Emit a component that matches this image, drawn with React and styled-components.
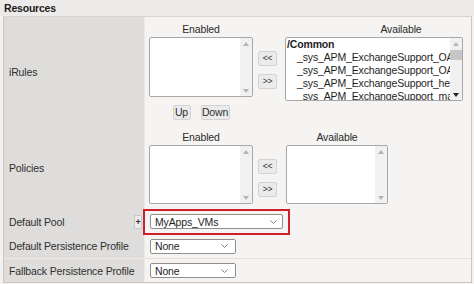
import React from 'react';
import styled, { createGlobalStyle } from 'styled-components';

const GlobalStyle = createGlobalStyle`
  body {
    margin: 0;
    background: #f3f2f0;
    font-family: "Liberation Sans", Arial, sans-serif;
    font-size: 10.5px;
    letter-spacing: -0.15px;
    color: #2b2b2b;
  }
  * { box-sizing: border-box; }
`;

const Header = styled.div`
  height: 16px;
  line-height: 17px;
  padding-left: 4px;
  font-weight: bold;
  font-size: 10.5px;
  letter-spacing: -0.2px;
  background: #ecebe9;
  color: #1d1d1d;
`;

const Table = styled.div`
  margin-left: 3px;
  width: 469px;
  border: 1px solid #c9c8c6;
  border-top-color: #d6d5d3;
  background: #f5f4f2;
`;

const Label = styled.div`
  background: #dedddb;
  border-right: 1px solid #eceae8;
  display: flex;
  align-items: center;
  justify-content: space-between;
  padding: 0 2px 0 5px;
  color: #2e2e2e;
`;

const Cell = styled.div`
  position: relative;
  display: flex;
  align-items: ${(p) => (p.$top ? 'flex-start' : 'center')};
  padding-left: ${(p) => p.$pl || 4}px;
  padding-top: ${(p) => p.$pt || 0}px;
`;

const Row = styled.div`
  display: grid;
  grid-template-columns: 141px 1fr;
  height: ${(p) => p.$h}px;
  & + & > ${Label} {
    border-top: 1px solid #ebeae8;
  }
  & + & > ${Cell} {
    border-top: 1px solid #e2e1df;
  }
`;

const Column = styled.div`
  display: flex;
  flex-direction: column;
  align-items: center;
  width: ${(p) => p.$w}px;
  margin-left: ${(p) => p.$ml || 0}px;
`;

const ColLabel = styled.div`
  width: 100%;
  height: 14px;
  line-height: 14px;
  margin-bottom: 1px;
  text-align: center;
  padding-left: ${(p) => p.$shift || 0}px;
  color: #2b2b2b;
`;

const ListBox = styled.div`
  width: 100%;
  height: ${(p) => p.$h}px;
  background: #fff;
  border: 1px solid #a8a8a8;
  border-radius: 2px;
  display: flex;
  overflow: hidden;
`;

const Options = styled.div`
  flex: 1;
  overflow: hidden;
  white-space: nowrap;
  padding-left: 1px;
  line-height: 13px;
  color: #1e1e1e;
`;

const Option = styled.div`
  font-weight: ${(p) => (p.$group ? 'bold' : 'normal')};
  padding-left: ${(p) => (p.$group ? 0 : 10)}px;
`;

const Track = styled.div`
  width: 12px;
  background: #f1f1f1;
  display: flex;
  flex-direction: column;
  align-items: center;
  padding: 4px 0 3px;
`;

const Thumb = styled.div`
  width: 12px;
  height: 10px;
  margin-top: 4px;
  background: #c6c6c6;
`;

const Spacer = styled.div`
  flex: 1;
`;

const MoveButtons = styled.div`
  display: flex;
  flex-direction: column;
  gap: 8px;
  margin-left: 5px;
  padding-top: ${(p) => p.$pt}px;
`;

const SmallButton = styled.div`
  width: ${(p) => p.$w || 19}px;
  height: 15px;
  line-height: 13px;
  text-align: center;
  background: #ebebeb;
  border: 1px solid #d3d3d3;
  border-radius: 2px;
  font-size: ${(p) => (p.$small ? 8.5 : 10.5)}px;
  color: #2e2e2e;
`;

const UpDown = styled.div`
  display: flex;
  gap: 10px;
  margin-top: 8px;
`;

const PlusButton = styled.div`
  width: 8px;
  height: 14px;
  line-height: 12px;
  text-align: center;
  font-size: 9px;
  font-weight: bold;
  background: #ececec;
  border: 1px solid #c9c9c9;
  color: #333;
`;

const Select = styled.div`
  width: ${(p) => p.$w}px;
  height: 15px;
  background: #fff;
  border: 1px solid #8f8f8f;
  border-radius: 2px;
  display: flex;
  align-items: center;
  justify-content: space-between;
  padding: 0 ${(p) => p.$pr || 7}px 0 4px;
  color: #1e1e1e;
`;

const Highlight = styled.div`
  position: absolute;
  left: -2px;
  top: 0;
  width: 147px;
  height: 26px;
  border: 2px solid #cf1f2b;
  pointer-events: none;
`;

const Arrow = ({ up, color = '#b5b5b5' }) => (
  <svg width="6" height="4" viewBox="0 0 6 4">
    <polygon points={up ? '0,4 3,0 6,4' : '0,0 6,0 3,4'} fill={color} />
  </svg>
);

const Chevron = () => (
  <svg width="7" height="4" viewBox="0 0 7 4">
    <polyline points="0.5,0.5 3.5,3.5 6.5,0.5" fill="none" stroke="#777" strokeWidth="0.9" />
  </svg>
);

const Scroll = ({ thumb, downColor }) => (
  <Track>
    <Arrow up />
    {thumb && <Thumb />}
    <Spacer />
    <Arrow color={downColor} />
  </Track>
);

const availableRules = [
  '_sys_APM_ExchangeSupport_OA_BasicAuth',
  '_sys_APM_ExchangeSupport_OA_NtlmAuth',
  '_sys_APM_ExchangeSupport_helper',
  '_sys_APM_ExchangeSupport_main',
];

const App = () => {
  return (
    <>
      <GlobalStyle />
      <Header>Resources</Header>
      <Table>
        <Row $h={109}>
          <Label>iRules</Label>
          <Cell $top $pt={5}>
            <Column $w={104}>
              <ColLabel>Enabled</ColLabel>
              <ListBox $h={60}>
                <Options />
                <Scroll />
              </ListBox>
              <UpDown>
                <SmallButton $w={18}>Up</SmallButton>
                <SmallButton $w={29}>Down</SmallButton>
              </UpDown>
            </Column>
            <MoveButtons $pt={29}>
              <SmallButton $small>&lt;&lt;</SmallButton>
              <SmallButton $small>&gt;&gt;</SmallButton>
            </MoveButtons>
            <Column $w={178} $ml={8}>
              <ColLabel $shift={54}>Available</ColLabel>
              <ListBox $h={64}>
                <Options>
                  <Option $group>/Common</Option>
                  {availableRules.map((rule, index) => (
                    <Option key={index}>{rule}</Option>
                  ))}
                </Options>
                <Scroll thumb downColor="#222" />
              </ListBox>
            </Column>
          </Cell>
        </Row>
        <Row $h={83}>
          <Label>Policies</Label>
          <Cell $top $pt={4}>
            <Column $w={104}>
              <ColLabel>Enabled</ColLabel>
              <ListBox $h={59}>
                <Options />
                <Scroll />
              </ListBox>
            </Column>
            <MoveButtons $pt={29}>
              <SmallButton $small>&lt;&lt;</SmallButton>
              <SmallButton $small>&gt;&gt;</SmallButton>
            </MoveButtons>
            <Column $w={102} $ml={9}>
              <ColLabel>Available</ColLabel>
              <ListBox $h={59}>
                <Options />
                <Scroll />
              </ListBox>
            </Column>
          </Cell>
        </Row>
        <Row $h={25}>
          <Label>
            Default Pool
            <PlusButton>+</PlusButton>
          </Label>
          <Cell $pl={5}>
            <Select $w={133} $pr={5}>
              MyApps_VMs
              <Chevron />
            </Select>
            <Highlight />
          </Cell>
        </Row>
        <Row $h={24}>
          <Label>Default Persistence Profile</Label>
          <Cell $pl={5}>
            <Select $w={86}>
              None
              <Chevron />
            </Select>
          </Cell>
        </Row>
        <Row $h={24}>
          <Label>Fallback Persistence Profile</Label>
          <Cell $pl={5}>
            <Select $w={86}>
              None
              <Chevron />
            </Select>
          </Cell>
        </Row>
      </Table>
    </>
  );
};

export default App;
